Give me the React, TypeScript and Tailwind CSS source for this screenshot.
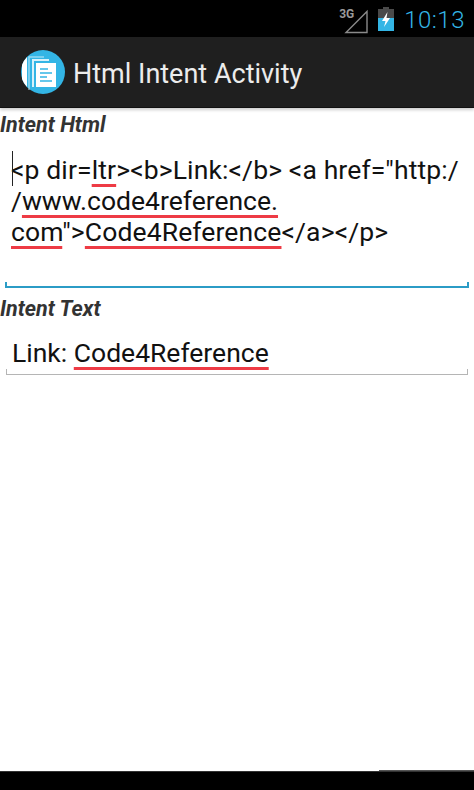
const Squiggle = ({ children }: { children: string }) => (
    <span className="underline decoration-[#ee3b45] decoration-[3px] underline-offset-[5px] [text-decoration-skip-ink:none]">
        {children}
    </span>
);

const StatusBar = () => (
    <div className="flex h-[37px] items-center justify-end bg-black pr-[9px]">
        <div className="relative mr-[9px] h-[30px] w-[28px]">
            <span className="absolute left-[-2px] top-[4px] font-['Roboto',sans-serif] text-[12px] font-bold leading-[12px] text-[#9a9a9a]">
                3G
            </span>
            <svg viewBox="0 0 28 30" className="absolute inset-0 h-full w-full" fill="none">
                <path d="M26 7.5V28.5H5L26 7.5Z" stroke="#8a8a8a" strokeWidth="1.4" />
            </svg>
        </div>
        <svg viewBox="0 0 16 24" className="mr-[10px] mt-[1px] h-[24px] w-[16px]">
            <path d="M5 0h6v2h5v22H0V2h5z" fill="#4a4a4a" />
            <path d="M0 11h16v13H0z" fill="#33b5e5" />
            <path d="M9.5 5 4 14h3.5L6 20l6-9H8.5z" fill="#fff" />
        </svg>
        <span className="mt-[2px] font-['Roboto',sans-serif] text-[24px] font-light leading-none tracking-[0.5px] text-[#33b5e5]">
            10:13
        </span>
    </div>
);

const ActionBar = () => (
    <div className="flex h-[71px] items-center border-b border-[#111] bg-[#1f1f1f] pl-[21px] shadow-[0_2px_3px_rgba(0,0,0,0.2)]">
        <svg viewBox="0 0 44 44" className="h-[44px] w-[44px]">
            <circle cx="22" cy="22" r="22" fill="#33b5e5" />
            <path d="M1 15a22 22 0 0 1 5-8v30a22 22 0 0 1-5-8z" fill="#fff" />
            <path d="M12 37V10h16" fill="none" stroke="#d6f1fb" strokeWidth="2" />
            <path d="M8 40V7h15" fill="none" stroke="#d6f1fb" strokeWidth="1.5" opacity="0.6" />
            <path d="M15 13h20v24H15z" fill="#fff" />
            <path d="M19 19h8M19 23h12M19 27h7M19 31h12" stroke="#33b5e5" strokeWidth="1.6" />
        </svg>
        <h1 className="ml-[8px] mt-[5px] text-[27px] leading-none text-[#ececec]">Html Intent Activity</h1>
    </div>
);

const Label = ({ children }: { children: string }) => (
    <p className="text-[21.5px] font-bold italic leading-[22px] text-[#333]">{children}</p>
);

const App = () => {
    return (
        <div className="flex h-[790px] w-[474px] flex-col overflow-hidden bg-white font-['Roboto',sans-serif]">
            <StatusBar />
            <ActionBar />
            <main className="flex-1 pt-[6px]">
                <Label>Intent Html</Label>

                <div className="relative mx-[5px] mt-[18px] h-[134px] pl-[6px] text-[26.5px] leading-[31px] text-[#111]">
                    <span className="absolute left-[7px] top-[-3px] h-[35px] w-px bg-[#222]" />
                    <p className="whitespace-nowrap tracking-[0.12px]">
                        {"<p dir="}<Squiggle>ltr</Squiggle>{'><b>Link:</b> <a href="http:/'}
                    </p>
                    <p className="whitespace-nowrap">
                        /<Squiggle>www.code4reference.</Squiggle>
                    </p>
                    <p className="whitespace-nowrap tracking-[0.12px]">
                        <Squiggle>com</Squiggle>{'">'}<Squiggle>Code4Reference</Squiggle>{"</a></p>"}
                    </p>
                </div>
                <div className="mx-[5px] mt-[-6px] h-[6px] border-x-2 border-b-2 border-[#2b9cc6]" />

                <div className="mt-[10px]">
                    <Label>Intent Text</Label>
                </div>
                <div className="mx-[6px] mt-[17px] pl-[6px] text-[26.5px] leading-[31px] text-[#111]">
                    Link: <Squiggle>Code4Reference</Squiggle>
                </div>
                <div className="mx-[6px] mt-[1px] h-[6px] border-x border-b border-[#b5b5b5]" />
            </main>
            <div className="flex h-[20px] flex-col justify-end">
                <div className="ml-[379px] h-px bg-[#555]" />
                <div className="h-[19px] border-t border-[#333] bg-black" />
            </div>
        </div>
    );
};

export default App;
